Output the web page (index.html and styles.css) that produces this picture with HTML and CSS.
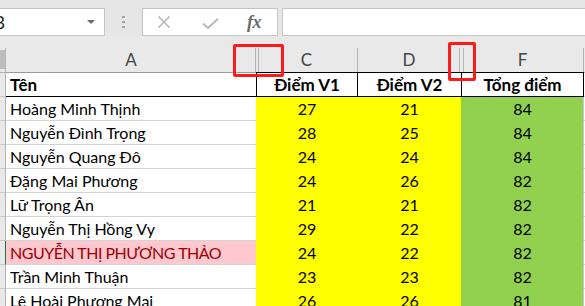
FILE: index.html
```html
<!DOCTYPE html>
<html lang="vi">
<head>
<meta charset="utf-8">
<link rel="stylesheet" href="styles.css">
</head>
<body>
<div class="app">
  <div class="toolbar">
    <div class="namebox"><span class="nb-text">B</span><span class="nb-arrow"></span></div>
    <div class="grip"><i></i><i></i><i></i></div>
    <div class="fbtns">
      <span class="fb fb-x"><svg width="14" height="12" viewBox="0 0 14 12"><path d="M1.5 0.5 L12.5 11.5 M12.5 0.5 L1.5 11.5" stroke="#b9b9b9" stroke-width="1.6" fill="none"/></svg></span>
      <span class="fb fb-ok"><svg width="17" height="11" viewBox="0 0 17 11"><path d="M1 5.5 L6 10 L16 0.8" stroke="#b9b9b9" stroke-width="2" fill="none"/></svg></span>
      <span class="fb fb-fx">fx</span>
    </div>
    <div class="finput"></div>
  </div>
  <div class="sheet">
    <div class="row hdr">
      <div class="c rh"></div>
      <div class="c a">A</div>
      <div class="c cc">C</div>
      <div class="c d">D</div>
      <div class="c f">F</div>
      <div class="c g"></div>
    </div>
    <div class="row title">
      <div class="c rh"></div>
      <div class="c a">Tên</div>
      <div class="c cc">Điểm V1</div>
      <div class="c d">Điểm V2</div>
      <div class="c f">Tổng điểm</div>
      <div class="c g"></div>
    </div>
    <div class="row data"><div class="c rh"></div><div class="c a">Hoàng Minh Thịnh</div><div class="c cc">27</div><div class="c d">21</div><div class="c f">84</div><div class="c g"></div></div>
    <div class="row data"><div class="c rh"></div><div class="c a">Nguyễn Đình Trọng</div><div class="c cc">28</div><div class="c d">25</div><div class="c f">84</div><div class="c g"></div></div>
    <div class="row data"><div class="c rh"></div><div class="c a">Nguyễn Quang Đô</div><div class="c cc">24</div><div class="c d">24</div><div class="c f">84</div><div class="c g"></div></div>
    <div class="row data"><div class="c rh"></div><div class="c a">Đặng Mai Phương</div><div class="c cc">24</div><div class="c d">26</div><div class="c f">82</div><div class="c g"></div></div>
    <div class="row data"><div class="c rh"></div><div class="c a">Lữ Trọng Ân</div><div class="c cc">21</div><div class="c d">21</div><div class="c f">82</div><div class="c g"></div></div>
    <div class="row data"><div class="c rh"></div><div class="c a">Nguyễn Thị Hồng Vy</div><div class="c cc">29</div><div class="c d">22</div><div class="c f">82</div><div class="c g"></div></div>
    <div class="row data active"><div class="c rh"></div><div class="c a dup">NGUYỄN THỊ PHƯƠNG THẢO</div><div class="c cc">24</div><div class="c d">22</div><div class="c f">82</div><div class="c g"></div></div>
    <div class="row data"><div class="c rh"></div><div class="c a">Trần Minh Thuận</div><div class="c cc">23</div><div class="c d">23</div><div class="c f">82</div><div class="c g"></div></div>
    <div class="row data"><div class="c rh"></div><div class="c a">Lê Hoài Phương Mai</div><div class="c cc">26</div><div class="c d">26</div><div class="c f">81</div><div class="c g"></div></div>
  </div>
  <div class="mark mark-b"></div>
  <div class="mark mark-e"></div>
</div>
</body>
</html>
```
FILE: styles.css
```css
* { box-sizing: border-box; }
html, body { margin: 0; padding: 0; }
body {
  width: 585px;
  height: 306px;
  overflow: hidden;
  background: #ffffff;
  font-family: Lato, "Liberation Sans", sans-serif;
  font-size: 16px;
  color: #000;
}
.app { position: relative; width: 585px; height: 306px; overflow: hidden; }

/* toolbar */
.toolbar {
  height: 36px;
  background: #e6e6e6;
  display: flex;
  align-items: flex-start;
  padding-top: 8px;
}
.namebox {
  margin-left: -1px;
  width: 106px;
  height: 28px;
  background: #fff;
  border: 1px solid #c6c6c6;
  display: flex;
  align-items: center;
  overflow: hidden;
}
.nb-text { margin-left: -6px; font-size: 17px; color: #222; }
.nb-arrow {
  margin-left: auto;
  margin-right: 9px;
  width: 0; height: 0;
  border-left: 4px solid transparent;
  border-right: 4px solid transparent;
  border-top: 4px solid #6a6a6a;
}
.grip {
  width: 37px;
  height: 28px;
  display: flex;
  flex-direction: column;
  align-items: center;
  justify-content: center;
  gap: 3px;
}
.grip i { display: block; width: 3px; height: 2px; background: #a6a6a6; }
.fbtns {
  width: 136px;
  height: 28px;
  background: #fff;
  border: 1px solid #c6c6c6;
  display: flex;
  align-items: center;
}
.fb { display: flex; align-items: center; justify-content: center; }
.fb-x { margin-left: 13px; width: 16px; }
.fb-ok { margin-left: 29px; width: 18px; margin-top: 3px; }
.fb-fx {
  margin-left: 28px;
  font-family: "Liberation Serif", "DejaVu Serif", serif;
  font-style: italic;
  font-weight: bold;
  font-size: 18px;
  color: #6b6b6b;
  letter-spacing: -0.5px;
}
.finput {
  flex: 1;
  margin-left: 4px;
  margin-right: -1px;
  height: 28px;
  background: #fff;
  border: 1px solid #c6c6c6;
}

/* sheet */
.sheet { display: flex; flex-direction: column; }
.row { display: flex; }
.c { flex: none; white-space: nowrap; overflow: hidden; }
.rh { width: 6px; }
.a { width: 250px; }
.cc { width: 101px; }
.d { width: 104px; }
.f { width: 123px; }
.g { flex: 1; }

/* column headers */
.hdr { height: 36px; background: #e9e9e9; }
.hdr .c {
  height: 36px;
  padding-top: 12px;
  line-height: 24px;
  text-align: center;
  color: #444;
  font-size: 17px;
  background-repeat: no-repeat;
}
.hdr .rh {
  background-image: linear-gradient(#b3b3b3, #b3b3b3), linear-gradient(#bdbdbd, #bdbdbd);
  background-size: 1px 24px, 5px 19px;
  background-position: right bottom, left 14px;
}
.hdr .a {
  background-image: linear-gradient(#b3b3b3, #b3b3b3);
  background-size: 1px 24px;
  background-position: right bottom;
}
.hdr .cc {
  background-image: linear-gradient(#b3b3b3, #b3b3b3);
  background-size: 1px 24px;
  background-position: 2px bottom;
}
.hdr .d {
  background-image: linear-gradient(#b3b3b3, #b3b3b3), linear-gradient(#b3b3b3, #b3b3b3);
  background-size: 1px 24px, 1px 24px;
  background-position: left bottom, 102px bottom;
}
.hdr .f {
  background-image: linear-gradient(#b3b3b3, #b3b3b3), linear-gradient(#b3b3b3, #b3b3b3);
  background-size: 1px 24px, 1px 24px;
  background-position: 2px bottom, right bottom;
}

/* title row */
.title .c {
  height: 25px;
  line-height: 23px;
  border-top: 1px solid #000;
  border-bottom: 1px solid #000;
  font-weight: bold;
  font-size: 17px;
  text-align: center;
}
.title .rh { background: #e9e9e9; border-top-color: #b3b3b3; border-bottom-color: #c8c8c8; border-right: 1px solid #b3b3b3; }
.title .a { text-align: left; padding-left: 4px; border-top-color: #9a9a9a; }
.title .cc, .title .d, .title .f { border-left: 1px solid #000; }
.title .f { border-right: 1px solid #000; }
.title .g { border-top-color: #b3b3b3; border-bottom-color: #d4d4d4; }

/* data rows */
.data .c {
  height: 24px;
  line-height: 23px;
  border-bottom: 1px solid #d4d4d4;
  text-align: center;
}
.data .rh { background: #e9e9e9; border-right: 1px solid #b3b3b3; border-bottom-color: #c8c8c8; }
.data.active .rh { border-right-color: #217346; }
.data .a { text-align: left; padding-left: 4px; }
.data .cc, .data .d { background: #ffff00; border-bottom-color: #ffff00; border-left: 1px solid #ffff00; }
.data .f { background: #92d050; border-bottom-color: #92d050; border-left: 1px solid #92d050; border-right: 1px solid #c9c9c9; }
.data .a.dup { background: #ffc7ce; color: #9c0006; letter-spacing: -0.5px; }

/* red annotation boxes */
.mark {
  position: absolute;
  border: 3px solid #ff1a1a;
  border-radius: 2px;
}
.mark-b { left: 233px; top: 44px; width: 51px; height: 33px; }
.mark-e { left: 448px; top: 42px; width: 28px; height: 39px; }
```
